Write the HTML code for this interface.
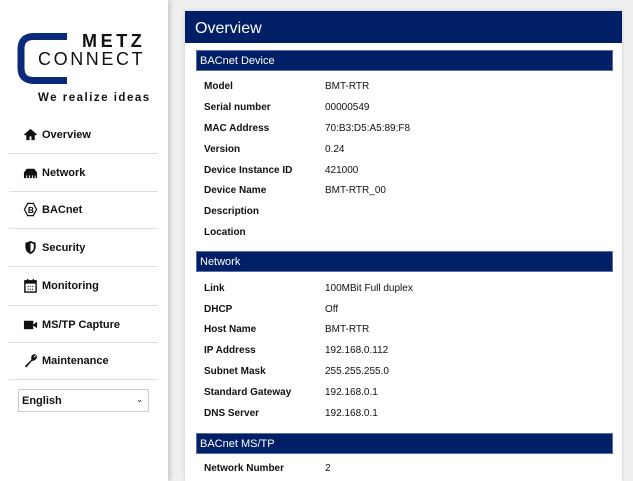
<!DOCTYPE html><html><head><style>
*{margin:0;padding:0;box-sizing:border-box}
html,body{width:633px;height:481px;overflow:hidden}
body{background:#efefef;font-family:"Liberation Sans",sans-serif;position:relative}
#side{position:absolute;left:0;top:0;width:168px;height:481px;background:#fff;box-shadow:2px 0 5px rgba(0,0,0,.18)}
.nav{position:absolute;left:23px;font-size:11px;font-weight:bold;color:#111;display:flex;align-items:center;gap:4px}
.nav svg{width:15px;height:15px}
.sep{position:absolute;left:9px;width:149px;height:1px;background:#ddd}
#card{position:absolute;left:185px;top:11px;width:437px;height:470px;background:#fff;box-shadow:0 0 4px rgba(0,0,0,.15)}
#hd{height:32px;background:#001f66;color:#fff;font-size:16px;padding:9px 10px 0}
.sh{position:absolute;left:11px;width:417px;height:21px;background:#001f66;border:1px solid #5a6fa6;color:#fff;font-size:11px;padding:4px 0 0 3px}
.r{position:absolute;font-size:10px;color:#111}
.l{left:19px;font-weight:bold}.v{left:140px}
</style></head><body>
<div id="side">
<svg style="position:absolute;left:17px;top:33px" width="52" height="51"><path d="M50 3.5 H17 Q4 3.5 4 16 V35 Q4 47.5 17 47.5 H50" fill="none" stroke="#0b2a7a" stroke-width="7"/></svg>
<div style="position:absolute;left:82px;top:31px;font-size:18px;font-weight:bold;letter-spacing:3.6px;color:#111">METZ</div>
<div style="position:absolute;left:38px;top:49px;font-size:18px;letter-spacing:2.6px;color:#111">CONNECT</div>
<div style="position:absolute;left:38px;top:92px;font-size:11.5px;font-weight:bold;letter-spacing:1.5px;color:#111">We realize ideas</div>
<div class="nav" style="top:127px"><svg viewBox="0 0 16 16"><path d="M8 2 L1 8 L2.5 9 L3.5 8.2V14H7V10H9V14H12.5V8.2L13.5 9L15 8Z" fill="#111"/></svg>Overview</div>
<div class="sep" style="top:153px"></div>
<div class="nav" style="top:165px"><svg viewBox="0 0 16 16"><path d="M1 14V8L4 4H12L15 8V14Z" fill="#111"/><path d="M4 11V14M7 11V14M10 11V14M13 11V14" stroke="#fff"/></svg>Network</div>
<div class="sep" style="top:191px"></div>
<div class="nav" style="top:202px"><svg viewBox="0 0 16 16"><path d="M5 1.5H11L14.5 8L11 14.5H5L1.5 8Z" fill="none" stroke="#111" stroke-width="1.3"/><text x="5.2" y="11.5" font-size="9" font-weight="bold" font-family="Liberation Sans">B</text></svg>BACnet</div>
<div class="sep" style="top:228px"></div>
<div class="nav" style="top:240px"><svg viewBox="0 0 16 16"><path d="M8 1L2.5 3V8Q3 13 8 15Q13 13 13.5 8V3Z" fill="#111"/><path d="M8 3V13Q11.5 11 11.5 8V4.2Z" fill="#fff"/></svg>Security</div>
<div class="sep" style="top:266px"></div>
<div class="nav" style="top:278px"><svg viewBox="0 0 16 16"><rect x="2" y="3" width="12" height="12" fill="none" stroke="#111" stroke-width="1.5"/><rect x="2" y="3" width="12" height="3" fill="#111"/><path d="M5 1V4M11 1V4" stroke="#111" stroke-width="1.5"/><path d="M5 9H11M5 12H11" stroke="#111" stroke-dasharray="1.3 1"/></svg>Monitoring</div>
<div class="sep" style="top:305px"></div>
<div class="nav" style="top:317px"><svg viewBox="0 0 16 16"><rect x="1" y="4" width="10" height="9" fill="#111"/><path d="M11 8L15 5V12L11 9Z" fill="#111"/></svg>MS/TP Capture</div>
<div class="sep" style="top:342px"></div>
<div class="nav" style="top:353px"><svg viewBox="0 0 16 16"><path d="M2 14L9 7Q8 3 11 1.5Q13 1 14 1.5L11.5 4L12 5L14.5 2Q15.5 5 13 7.5Q11 8.5 9.5 8.5L3.5 15.5Z" fill="#111"/></svg>Maintenance</div>
<div class="sep" style="top:379px"></div>
<div style="position:absolute;left:18px;top:389px;width:131px;height:23px;border:1px solid #ccc;font-size:11px;font-weight:bold;padding:5px 3px;color:#111">English<span style="position:absolute;right:5px;top:5px;font-size:8px;font-weight:normal">&#8964;</span></div>
</div>
<div id="card">
<div id="hd">Overview</div>
<div class="sh" style="top:39px">BACnet Device</div>
<div class="r l" style="top:70px">Model</div><div class="r v" style="top:70px">BMT-RTR</div>
<div class="r l" style="top:91px">Serial number</div><div class="r v" style="top:91px">00000549</div>
<div class="r l" style="top:112px">MAC Address</div><div class="r v" style="top:112px">70:B3:D5:A5:89:F8</div>
<div class="r l" style="top:133px">Version</div><div class="r v" style="top:133px">0.24</div>
<div class="r l" style="top:154px">Device Instance ID</div><div class="r v" style="top:154px">421000</div>
<div class="r l" style="top:174px">Device Name</div><div class="r v" style="top:174px">BMT-RTR_00</div>
<div class="r l" style="top:195px">Description</div>
<div class="r l" style="top:216px">Location</div>
<div class="sh" style="top:240px">Network</div>
<div class="r l" style="top:272px">Link</div><div class="r v" style="top:272px">100MBit Full duplex</div>
<div class="r l" style="top:293px">DHCP</div><div class="r v" style="top:293px">Off</div>
<div class="r l" style="top:313px">Host Name</div><div class="r v" style="top:313px">BMT-RTR</div>
<div class="r l" style="top:334px">IP Address</div><div class="r v" style="top:334px">192.168.0.112</div>
<div class="r l" style="top:355px">Subnet Mask</div><div class="r v" style="top:355px">255.255.255.0</div>
<div class="r l" style="top:376px">Standard Gateway</div><div class="r v" style="top:376px">192.168.0.1</div>
<div class="r l" style="top:397px">DNS Server</div><div class="r v" style="top:397px">192.168.0.1</div>
<div class="sh" style="top:422px">BACnet MS/TP</div>
<div class="r l" style="top:452px">Network Number</div><div class="r v" style="top:452px">2</div>
</div>
</body></html>
